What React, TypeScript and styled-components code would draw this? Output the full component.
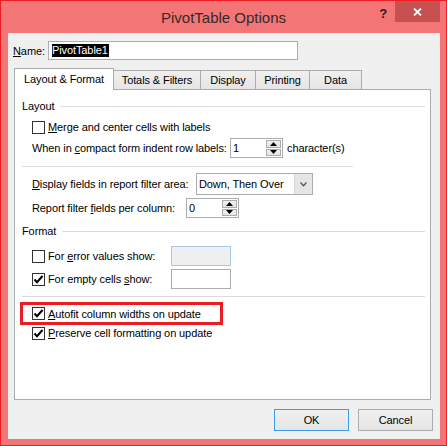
import React from 'react';
import styled, { createGlobalStyle } from 'styled-components';

const GlobalStyle = createGlobalStyle`
  html, body { margin: 0; padding: 0; background: #fff; }
  body {
    font-family: "Liberation Sans", Arial, sans-serif;
    font-size: 11px;
    letter-spacing: -0.1px;
    color: #000;
  }
`;

const Window = styled.div`
  width: 447px;
  height: 446px;
  box-sizing: border-box;
  border: 1px solid #ee1c25;
  background: #f37575;
  display: flex;
  flex-direction: column;
`;

const TitleBar = styled.div`
  height: 32px;
  flex: none;
  display: grid;
  grid-template-columns: 1fr auto 1fr;
`;

const Title = styled.div`
  align-self: center;
  font-size: 15px;
  letter-spacing: 0;
  color: #352a2a;
  padding-top: 1px;
`;

const Controls = styled.div`
  display: flex;
  justify-content: flex-end;
  align-items: flex-start;
`;

const Help = styled.span`
  margin-top: 5px;
  margin-right: 8px;
  font-weight: bold;
  font-size: 13px;
  color: #222;
`;

const CloseButton = styled.div`
  width: 45px;
  height: 21px;
  margin-right: 6px;
  background: #c75050;
  display: flex;
  align-items: center;
  justify-content: center;
`;

const Client = styled.div`
  flex: 1;
  margin: 0 6px 6px 7px;
  background: #f0f0f0;
  display: flex;
  flex-direction: column;
`;

const NameRow = styled.div`
  display: flex;
  align-items: center;
  height: 19px;
  margin: 8px 0 0 5px;
`;

const NameLabel = styled.span`
  width: 35px;
`;

const NameInput = styled.div`
  width: 250px;
  height: 19px;
  box-sizing: border-box;
  border: 1px solid #abadb3;
  background: #fff;
  display: flex;
  align-items: center;
  padding-left: 3px;
`;

const Selected = styled.span`
  background: #000;
  color: #fff;
  line-height: 13px;
  padding-right: 1px;
`;

const TabStrip = styled.div`
  display: flex;
  align-items: flex-end;
  height: 21px;
  margin: 8px 0 0 6px;
`;

const Tab = styled.div<{ $w: number; $active?: boolean }>`
  width: ${p => p.$w}px;
  height: ${p => (p.$active ? 22 : 19)}px;
  margin-bottom: ${p => (p.$active ? -1 : 0)}px;
  margin-left: ${p => (p.$active ? 0 : -1)}px;
  box-sizing: border-box;
  border: 1px solid #acacac;
  border-bottom: none;
  background: ${p => (p.$active ? '#fff' : 'linear-gradient(#f0f0f0, #e5e5e5)')};
  position: relative;
  z-index: ${p => (p.$active ? 2 : 1)};
  display: flex;
  align-items: center;
  justify-content: center;
  white-space: nowrap;
  padding-bottom: ${p => (p.$active ? 2 : 0)}px;
`;

const Panel = styled.div`
  width: 417px;
  height: 311px;
  margin-left: 6px;
  box-sizing: border-box;
  border: 1px solid #acacac;
  background: #fff;
  display: flex;
  flex-direction: column;
  position: relative;
  z-index: 1;
`;

const GroupHeader = styled.div<{ $mt: number }>`
  display: flex;
  align-items: center;
  height: 14px;
  margin: ${p => p.$mt}px 5px 0 7px;
  &::after {
    content: '';
    flex: 1;
    height: 1px;
    background: #dcdcdc;
    margin-left: 6px;
  }
`;

const Row = styled.div<{ $mt?: number; $h: number; $indent?: number }>`
  display: flex;
  align-items: center;
  height: ${p => p.$h}px;
  margin-top: ${p => p.$mt ?? 0}px;
  padding-left: ${p => p.$indent ?? 17}px;
  white-space: nowrap;
`;

const FieldLabel = styled.span<{ $w?: number; $ml?: number }>`
  ${p => (p.$w ? `width: ${p.$w}px;` : '')}
  margin-left: ${p => p.$ml ?? 0}px;
  flex: none;
`;

const Separator = styled.div<{ $mt: number; $w?: number }>`
  height: 1px;
  background: #dcdcdc;
  margin: ${p => p.$mt}px 5px 0 7px;
  ${p => (p.$w ? `width: ${p.$w}px;` : '')}
`;

const Box = styled.span`
  width: 13px;
  height: 13px;
  box-sizing: border-box;
  border: 1px solid #333;
  background: #fff;
  flex: none;
  margin-right: 3px;
  display: flex;
  align-items: center;
  justify-content: center;
`;

const Key = styled.span`
  text-decoration: underline;
`;

const SpinBox = styled.div<{ $w: number }>`
  width: ${p => p.$w}px;
  height: 20px;
  box-sizing: border-box;
  border: 1px solid #abadb3;
  background: #fff;
  display: flex;
  align-items: stretch;
  flex: none;
`;

const SpinValue = styled.span`
  flex: 1;
  display: flex;
  align-items: center;
  padding-left: 2px;
`;

const SpinButtons = styled.div`
  width: 15px;
  margin: 1px 1px 1px 0;
  display: flex;
  flex-direction: column;
  gap: 1px;
`;

const SpinHalf = styled.div`
  flex: 1;
  border: 1px solid #acacac;
  background: linear-gradient(#f0f0f0, #e5e5e5);
  display: flex;
  align-items: center;
  justify-content: center;
`;

const Combo = styled.div`
  width: 117px;
  height: 22px;
  box-sizing: border-box;
  border: 1px solid #acacac;
  background: #fff;
  display: flex;
  align-items: stretch;
  flex: none;
`;

const ComboValue = styled.span`
  flex: 1;
  display: flex;
  align-items: center;
  padding-left: 2px;
`;

const ComboButton = styled.div`
  width: 17px;
  background: #e5e5e5;
  border-left: 1px solid #d9d9d9;
  display: flex;
  align-items: center;
  justify-content: center;
`;

const TextBox = styled.div<{ $disabled?: boolean }>`
  width: 60px;
  height: 20px;
  box-sizing: border-box;
  border: 1px solid ${p => (p.$disabled ? '#a9c8e6' : '#acacac')};
  background: ${p => (p.$disabled ? '#efefef' : '#fff')};
  flex: none;
`;

const Highlight = styled.div`
  width: 203px;
  height: 23px;
  box-sizing: border-box;
  border: 3px solid #ea1d25;
  margin: 5px 0 0 5px;
  display: flex;
  align-items: center;
  padding-left: 9px;
  white-space: nowrap;
`;

const ButtonBar = styled.div`
  display: flex;
  justify-content: flex-end;
  gap: 9px;
  margin: 9px 7px 0 0;
`;

const Button = styled.div<{ $default?: boolean }>`
  width: 75px;
  height: 22px;
  box-sizing: border-box;
  border: 1px solid ${p => (p.$default ? '#3c9bee' : '#acacac')};
  background: linear-gradient(#f0f0f0, #e5e5e5);
  display: flex;
  align-items: center;
  justify-content: center;
`;

const Check = ({ checked }: { checked?: boolean }) => (
  <Box>
    {checked && (
      <svg width="11" height="11" viewBox="0 0 11 11">
        <path d="M1.5 5.5 L4 8.2 L9.5 2" fill="none" stroke="#000" strokeWidth="2" />
      </svg>
    )}
  </Box>
);

const Spinner = ({ value, w }: { value: string; w: number }) => (
  <SpinBox $w={w}>
    <SpinValue>{value}</SpinValue>
    <SpinButtons>
      <SpinHalf>
        <svg width="7" height="4" viewBox="0 0 7 4"><path d="M0 4 L3.5 0 L7 4 Z" fill="#000" /></svg>
      </SpinHalf>
      <SpinHalf>
        <svg width="7" height="4" viewBox="0 0 7 4"><path d="M0 0 L3.5 4 L7 0 Z" fill="#000" /></svg>
      </SpinHalf>
    </SpinButtons>
  </SpinBox>
);

const tabs = [
  { label: 'Layout & Format', w: 100, active: true },
  { label: 'Totals & Filters', w: 88 },
  { label: 'Display', w: 56 },
  { label: 'Printing', w: 55 },
  { label: 'Data', w: 53 },
];

const App = () => {
  return (
    <>
      <GlobalStyle />
      <Window>
        <TitleBar>
          <div />
          <Title>PivotTable Options</Title>
          <Controls>
            <Help>?</Help>
            <CloseButton>
              <svg width="9" height="8" viewBox="0 0 9 8">
                <path d="M1 0.5 L8 7.5 M8 0.5 L1 7.5" stroke="#fff" strokeWidth="1.8" />
              </svg>
            </CloseButton>
          </Controls>
        </TitleBar>

        <Client>
          <NameRow>
            <NameLabel><Key>N</Key>ame:</NameLabel>
            <NameInput><Selected>PivotTable1</Selected></NameInput>
          </NameRow>

          <TabStrip>
            {tabs.map(t => (
              <Tab key={t.label} $w={t.w} $active={t.active}>{t.label}</Tab>
            ))}
          </TabStrip>

          <Panel>
            <GroupHeader $mt={9}>Layout</GroupHeader>
            <Row $mt={4} $h={20}>
              <Check />
              <span><Key>M</Key>erge and center cells with labels</span>
            </Row>
            <Row $mt={1} $h={20}>
              <FieldLabel $w={198}>When in <Key>c</Key>ompact form indent row labels:</FieldLabel>
              <Spinner value="1" w={53} />
              <FieldLabel $ml={4}>character(s)</FieldLabel>
            </Row>
            <Separator $mt={8} $w={331} />
            <Row $mt={6} $h={22}>
              <FieldLabel $w={164}><Key>D</Key>isplay fields in report filter area:</FieldLabel>
              <Combo>
                <ComboValue>Down, Then Over</ComboValue>
                <ComboButton>
                  <svg width="7" height="5" viewBox="0 0 7 5">
                    <path d="M0.5 0.5 L3.5 3.8 L6.5 0.5" fill="none" stroke="#555" strokeWidth="1.3" />
                  </svg>
                </ComboButton>
              </Combo>
            </Row>
            <Row $mt={3} $h={20}>
              <FieldLabel $w={154}>Report filter <Key>f</Key>ields per column:</FieldLabel>
              <Spinner value="0" w={53} />
            </Row>

            <GroupHeader $mt={6}>Format</GroupHeader>
            <Row $mt={8} $h={20}>
              <Check />
              <FieldLabel $w={123}>For <Key>e</Key>rror values show:</FieldLabel>
              <TextBox $disabled />
            </Row>
            <Row $mt={3} $h={20}>
              <Check checked />
              <FieldLabel $w={123}>For empty cells <Key>s</Key>how:</FieldLabel>
              <TextBox />
            </Row>
            <Separator $mt={7} />
            <Highlight>
              <Check checked />
              <span><Key>A</Key>utofit column widths on update</span>
            </Highlight>
            <Row $h={16}>
              <Check checked />
              <span><Key>P</Key>reserve cell formatting on update</span>
            </Row>
          </Panel>

          <ButtonBar>
            <Button $default>OK</Button>
            <Button>Cancel</Button>
          </ButtonBar>
        </Client>
      </Window>
    </>
  );
};

export default App;
